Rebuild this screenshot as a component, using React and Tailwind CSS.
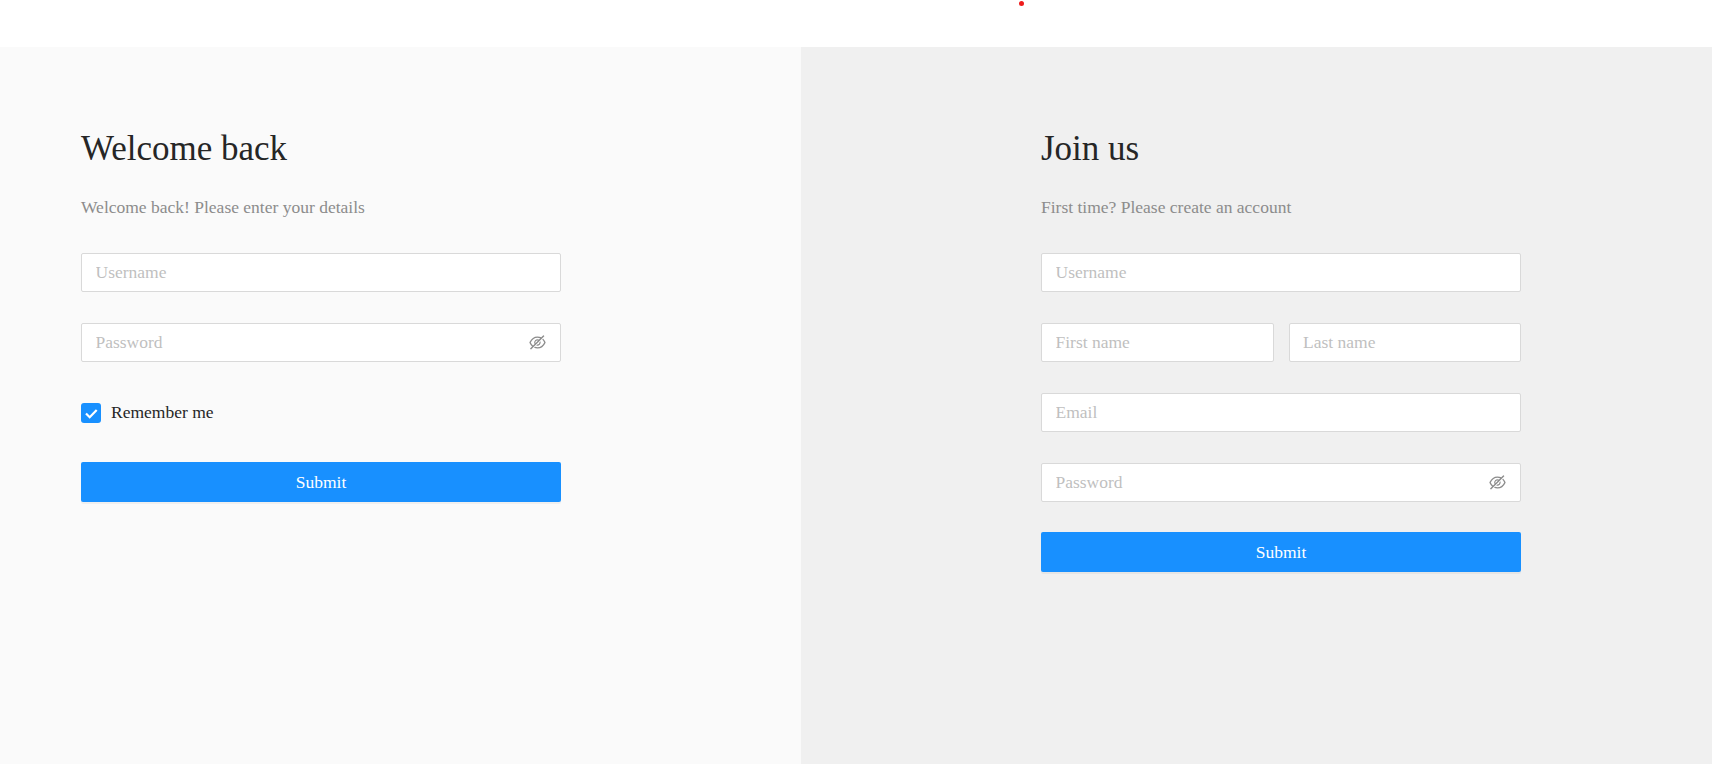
import { AiOutlineEyeInvisible } from 'react-icons/ai';

const Field = ({ placeholder, type = 'text', secret = false, className = '' }) => (
  <div className={`relative flex h-[39px] min-w-0 items-center rounded-[2px] border border-[#d9d9d9] bg-white ${className}`}>
    <input
      type={type}
      placeholder={placeholder}
      className="h-full w-full min-w-0 bg-transparent px-[13.5px] text-[17.5px] text-[#262626] outline-none placeholder:text-[#bfbfbf]"
    />
    {secret && (
      <AiOutlineEyeInvisible className="mr-[13.5px] h-[19px] w-[19px] shrink-0 text-[#8c8c8c]" />
    )}
  </div>
);

const SubmitButton = () => (
  <button
    type="button"
    className="mt-[30px] h-10 w-full rounded-[2px] bg-[#1890ff] text-[17.5px] text-white shadow-[0_2px_0_rgba(0,0,0,0.045)]"
  >
    Submit
  </button>
);

const Heading = ({ title, subtitle }) => (
  <div className="mb-[34px]">
    <h1 className="text-[35px] leading-[44px] font-normal text-[#262626]">{title}</h1>
    <p className="mt-[24px] text-[17.5px] leading-6 text-[#8c8c8c]">{subtitle}</p>
  </div>
);

const App = () => (
  <div className="relative flex min-h-[764px] flex-col bg-white font-['Liberation_Serif',serif]">
    <span className="absolute top-[1px] left-[1019px] h-[5px] w-[5px] rounded-full bg-[#ee1c1c]" />
    <div className="h-[47px] shrink-0" />
    <div className="flex h-[717px]">
      <section className="w-[801px] shrink-0 bg-[#fafafa] pt-[80px] pl-[81px]">
        <div className="w-[480px]">
          <Heading title="Welcome back" subtitle="Welcome back! Please enter your details" />
          <div className="flex flex-col gap-[31px]">
            <Field placeholder="Username" />
            <Field placeholder="Password" type="password" secret />
          </div>
          <label className="mt-[31px] flex h-[39px] items-center gap-[10px] text-[17.5px] text-[#262626]">
            <span className="flex h-5 w-5 items-center justify-center rounded-[3px] bg-[#1890ff]">
              <svg viewBox="0 0 20 20" className="h-5 w-5" fill="none" stroke="white" strokeWidth="2.2">
                <path d="M5 10.5 8.7 14.2 15.7 7" />
              </svg>
            </span>
            Remember me
          </label>
          <SubmitButton />
        </div>
      </section>
      <section className="flex-1 bg-[#f0f0f0] pt-[80px] pl-[240px]">
        <div className="w-[480px]">
          <Heading title="Join us" subtitle="First time? Please create an account" />
          <div className="flex flex-col gap-[31px]">
            <Field placeholder="Username" />
            <div className="flex gap-[15px]">
              <Field placeholder="First name" className="flex-1" />
              <Field placeholder="Last name" className="flex-1" />
            </div>
            <Field placeholder="Email" type="email" />
            <Field placeholder="Password" type="password" secret />
          </div>
          <SubmitButton />
        </div>
      </section>
    </div>
  </div>
);

export default App;
